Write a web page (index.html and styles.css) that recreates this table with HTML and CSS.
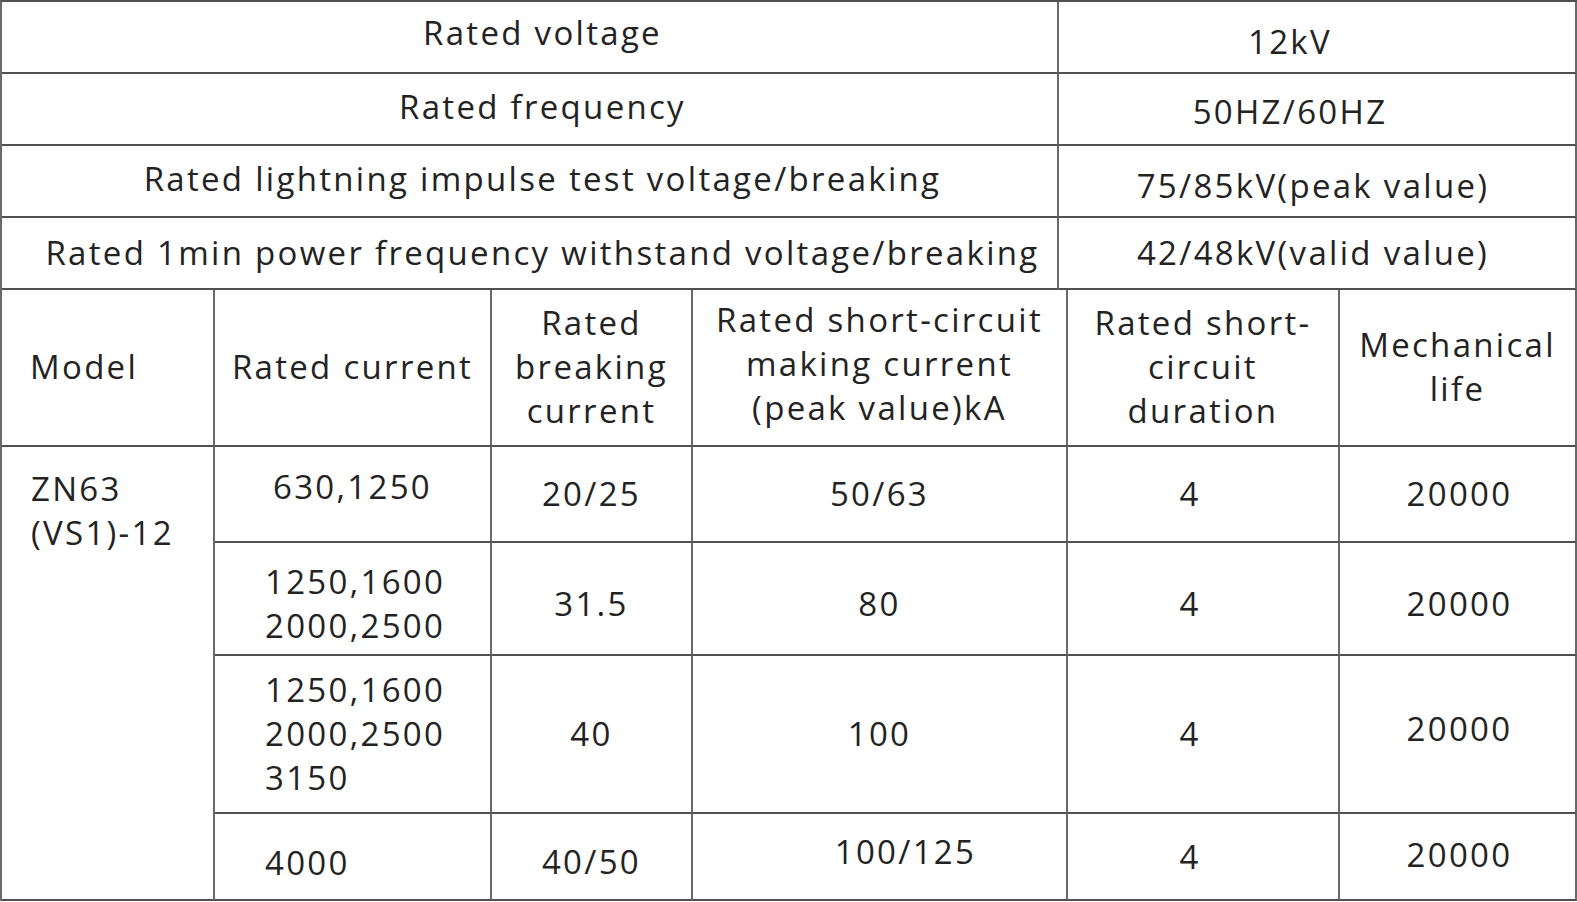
FILE: index.html
```html
<!DOCTYPE html>
<html lang="en">
<head>
<meta charset="utf-8">
<title>ZN63 (VS1)-12 technical parameters</title>
<link rel="stylesheet" href="styles.css">
</head>
<body>
<div class="sheet">
  <div class="general">
    <div class="cell name up4">Rated voltage</div>
    <div class="cell value early down4">12kV</div>
    <div class="cell name up2">Rated frequency</div>
    <div class="cell value early down2">50HZ/60HZ</div>
    <div class="cell name up2">Rated lightning impulse test voltage/breaking</div>
    <div class="cell value down6">75/85kV(peak value)</div>
    <div class="cell name">Rated 1min power frequency withstand voltage/breaking</div>
    <div class="cell value">42/48kV(valid value)</div>
  </div>
  <div class="models">
    <div class="cell head left">Model</div>
    <div class="cell head">Rated current</div>
    <div class="cell head">Rated<br>breaking<br>current</div>
    <div class="cell head up4">Rated short-circuit<br>making current<br>(peak value)kA</div>
    <div class="cell head">Rated short-<br>circuit<br>duration</div>
    <div class="cell head">Mechanical<br>life</div>

    <div class="cell model">ZN63<br>(VS1)-12</div>
    <div class="cell up6">630,1250</div>
    <div class="cell">20/25</div>
    <div class="cell">50/63</div>
    <div class="cell dur">4</div>
    <div class="cell last">20000</div>

    <div class="cell list lower">1250,1600<br>2000,2500</div>
    <div class="cell lower">31.5</div>
    <div class="cell lower">80</div>
    <div class="cell dur lower">4</div>
    <div class="cell last lower">20000</div>

    <div class="cell list">1250,1600<br>2000,2500<br>3150</div>
    <div class="cell">40</div>
    <div class="cell">100</div>
    <div class="cell dur">4</div>
    <div class="cell last up10">20000</div>

    <div class="cell list down8">4000</div>
    <div class="cell down6">40/50</div>
    <div class="cell shift">100/125</div>
    <div class="cell dur">4</div>
    <div class="cell last up2">20000</div>
  </div>
</div>
</body>
</html>
```

FILE: styles.css
```css
* {
  box-sizing: border-box;
}

html, body {
  margin: 0;
  padding: 0;
  background: #ffffff;
}

body {
  font-family: "Open Sans", "Noto Sans", "Liberation Sans", sans-serif;
  font-size: 33px;
  line-height: 44px;
  letter-spacing: 2.3px;
  color: #232323;
  width: 1577px;
  height: 902px;
  overflow: hidden;
}

.sheet {
  width: 1577px;
  border-top: 2px solid #505050;
  border-left: 2px solid #6a6a6a;
}

.cell {
  display: flex;
  align-items: center;
  justify-content: center;
  text-align: center;
  border-right: 2px solid #6a6a6a;
  border-bottom: 2px solid #505050;
  white-space: nowrap;
}

.general {
  display: grid;
  grid-template-columns: 1057px 518px;
  grid-auto-rows: 72px;
}

.general .name {
  padding-left: 26px;
}

.general .value {
  padding-right: 8px;
}

.general .early {
  padding-right: 54px;
}

.models {
  display: grid;
  grid-template-columns: 213px 277px 201px 375px 272px 237px;
  grid-template-rows: 157px 96px 113px 158px 87px;
}

.head {
  padding-bottom: 2px;
}

.left {
  justify-content: flex-start;
  padding-left: 28px;
}

.model {
  grid-row: span 4;
  align-items: flex-start;
  justify-content: flex-start;
  text-align: left;
  padding: 20px 0 0 29px;
}

.list {
  justify-content: flex-start;
  text-align: left;
  padding-left: 50px;
}

.dur {
  padding-right: 26px;
}

.last {
  padding-left: 4px;
}

.shift {
  padding-left: 52px;
  padding-bottom: 10px;
}

.lower { padding-top: 10px; }
.up2 { padding-bottom: 4px; }
.up4 { padding-bottom: 8px; }
.up6 { padding-bottom: 14px; }
.up10 { padding-bottom: 10px; }
.down2 { padding-top: 6px; }
.down4 { padding-top: 10px; }
.down6 { padding-top: 10px; }
.down8 { padding-top: 12px; }
```
